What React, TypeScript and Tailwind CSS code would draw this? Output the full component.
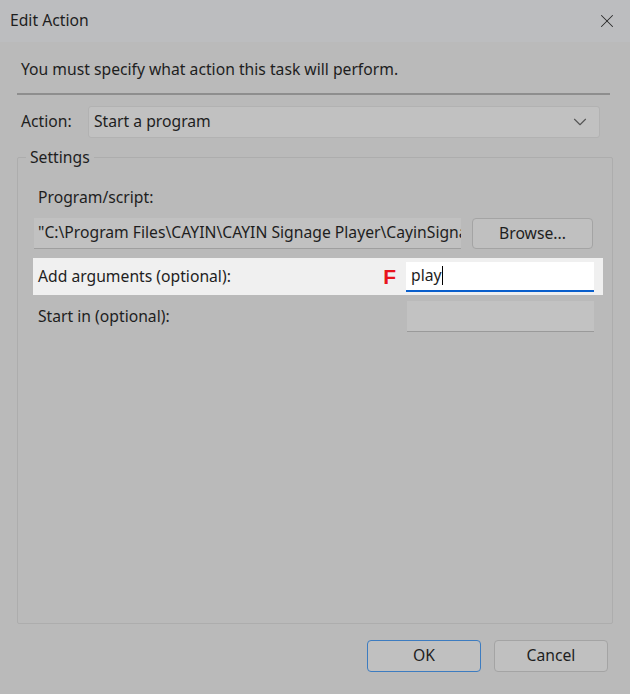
import { X, ChevronDown } from 'lucide-react';

const font = { fontFamily: '"Noto Sans", "Open Sans", sans-serif' };

function App() {
  return (
    <div className="w-[630px] h-[694px] bg-[#bababa] text-[#1e1e1e] flex flex-col overflow-hidden text-[15.7px]" style={font}>
      {/* Title bar */}
      <div className="h-[42px] bg-[#bcbdbf] flex items-center pl-[10px] pr-[12px] shrink-0">
        <span className="flex-1">Edit Action</span>
        <X size={22} strokeWidth={1.1} className="text-[#2a2a2a]" />
      </div>

      <div className="pt-[15px] pl-[21px] leading-[24px]">You must specify what action this task will perform.</div>
      <div className="mt-[12px] ml-[17px] mr-[20px] h-[2px] bg-[#8e8e8e]" />

      {/* Action row */}
      <div className="mt-[11px] flex items-center pl-[21px] pr-[30px]">
        <span className="w-[67px]">Action:</span>
        <div className="flex-1 h-[32px] bg-[#c1c1c1] border border-[#b2b2b2] rounded-[3px] flex items-center pl-[5px] pr-[8px]">
          <span className="flex-1">Start a program</span>
          <ChevronDown size={22} strokeWidth={1.2} className="text-[#555]" />
        </div>
      </div>

      {/* Settings group */}
      <div className="relative mt-[19px] ml-[17px] mr-[17px] h-[467px] border border-[#adadad] rounded-[2px]">
        <span className="absolute -top-[12px] left-[8px] px-[4px] bg-[#bababa] leading-[22px]">Settings</span>

        <div className="pt-[28px] pl-[20px] leading-[22px]">Program/script:</div>
        <div className="mt-[10px] flex items-center pl-[16px] pr-[19px] gap-[11px]">
          <div className="w-[427px] h-[31px] bg-[#c1c1c1] border-b border-[#9f9f9f] flex items-center pl-[4px] overflow-hidden whitespace-nowrap">
            <span className="overflow-hidden text-clip">"C:\Program Files\CAYIN\CAYIN Signage Player\CayinSignag</span>
          </div>
          <div className="flex-1 h-[31px] bg-[#c0c0c0] border border-[#a4a4a4] rounded-[4px] flex items-center justify-center">
            Browse...
          </div>
        </div>

        <div className="mt-[9px] ml-[15px] mr-[9px] h-[37px] bg-[#f0f0f0] flex items-center pl-[5px] pr-[9px]">
          <span className="flex-1">Add arguments (optional):</span>
          <span className="text-[#e8141c] font-bold text-[21px] mr-[10px]" style={{ fontFamily: '"Liberation Sans", Arial, sans-serif' }}>F</span>
          <div className="w-[188px] h-[30px] bg-white border-b-2 border-[#0a5fcc] flex items-center pl-[5px]">
            <span>play</span>
            <span className="w-[1px] h-[19px] bg-black" />
          </div>
        </div>

        <div className="mt-[6px] flex items-center pl-[20px] pr-[18px]">
          <span className="flex-1">Start in (optional):</span>
          <div className="w-[187px] h-[31px] bg-[#c2c2c2] border-b border-[#9a9a9a]" />
        </div>
      </div>

      {/* Buttons */}
      <div className="mt-[16px] flex justify-end gap-[13px] pr-[22px]">
        <div className="w-[114px] h-[32px] bg-[#c0c0c0] border border-[#3d7cc0] rounded-[4px] flex items-center justify-center">OK</div>
        <div className="w-[114px] h-[32px] bg-[#c0c0c0] border border-[#a4a4a4] rounded-[4px] flex items-center justify-center">Cancel</div>
      </div>
    </div>
  );
}

export default App;
